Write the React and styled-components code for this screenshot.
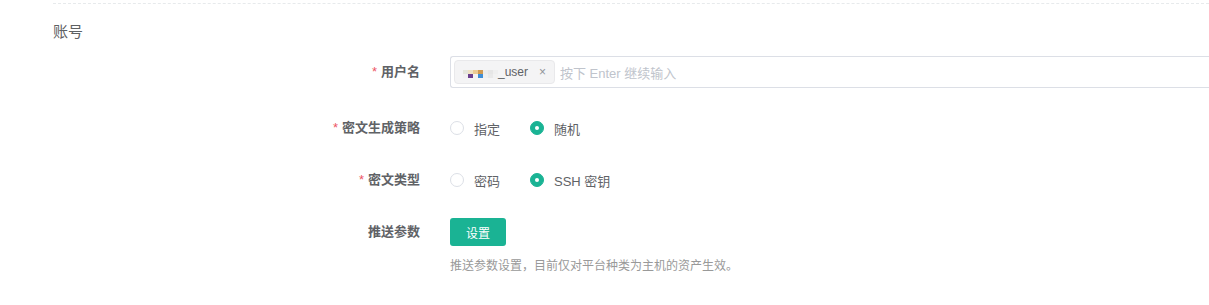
import React, { useState } from 'react'
import styled, { createGlobalStyle } from 'styled-components'

const GlobalStyle = createGlobalStyle`
  html, body {
    margin: 0;
    padding: 0;
    background: #fff;
    overflow: hidden;
  }
  body {
    font-family: "Liberation Sans", "Noto Sans CJK SC", sans-serif;
    color: #606266;
  }
`

const Section = styled.div`
  padding: 3px 0 0 53px;
`

const Divider = styled.div`
  border-top: 1px dashed #e7eaec;
  height: 0;
`

const Heading = styled.h3`
  margin: 18px 0 0;
  font-size: 15px;
  line-height: 20px;
  font-weight: normal;
  color: #5e6163;
`

const Form = styled.div`
  margin-top: 14px;
  margin-left: -53px;
`

const Row = styled.div`
  display: flex;
  align-items: flex-start;
  margin-bottom: ${({ gap }) => gap}px;
`

const Label = styled.label`
  flex: 0 0 420px;
  text-align: right;
  font-size: 13px;
  font-weight: bold;
  line-height: 32px;
  color: #606266;
  padding-right: 30px;
  box-sizing: content-box;
`

const Star = styled.span`
  color: #ed5565;
  font-weight: normal;
  margin-right: 4px;
`

const Content = styled.div`
  flex: 1;
  min-width: 0;
  display: flex;
  flex-direction: column;
  align-items: flex-start;
`

const Line = styled.div`
  height: 32px;
  display: flex;
  align-items: center;
`

const TagInput = styled.div`
  align-self: stretch;
  height: 32px;
  box-sizing: border-box;
  border: 1px solid #dcdfe6;
  border-right: none;
  border-radius: 3px 0 0 3px;
  display: flex;
  align-items: center;
  padding-left: 3px;
`

const Tag = styled.span`
  display: inline-flex;
  align-items: center;
  height: 24px;
  width: 101px;
  box-sizing: border-box;
  padding: 0 8px 0 8px;
  background: #f4f4f5;
  border: 1px solid #e9e9eb;
  border-radius: 4px;
  font-size: 12px;
  color: #606266;
`

const Mosaic = styled.span`
  display: inline-grid;
  grid-template-columns: repeat(7, 5px);
  grid-auto-rows: 4px;
  margin-top: 3px;
`

const Cell = styled.span`
  background: ${({ c }) => c};
`

const Close = styled.span`
  margin-left: auto;
  font-size: 12px;
  color: #909399;
`

const Placeholder = styled.span`
  margin-left: 5px;
  font-size: 13px;
  color: #c0c4cc;
`

const RadioOption = styled.label`
  display: inline-flex;
  align-items: center;
  margin-right: 30px;
  cursor: pointer;
  font-size: 13px;
  color: #606266;
`

const RadioDot = styled.span`
  width: 14px;
  height: 14px;
  box-sizing: border-box;
  border-radius: 50%;
  border: 1px solid ${({ checked }) => (checked ? '#1ab394' : '#dcdfe6')};
  background: ${({ checked }) => (checked ? '#1ab394' : '#fff')};
  display: inline-flex;
  align-items: center;
  justify-content: center;
  margin-right: 10px;
  &::after {
    content: '';
    width: 4px;
    height: 4px;
    border-radius: 50%;
    background: #fff;
    display: ${({ checked }) => (checked ? 'block' : 'none')};
  }
`

const Button = styled.button`
  height: 28px;
  width: 56px;
  border: none;
  border-radius: 3px;
  background: #1ab394;
  color: #fff;
  font-family: inherit;
  font-size: 12px;
  cursor: pointer;
`

const Help = styled.div`
  margin-top: 9px;
  font-size: 12px;
  line-height: 18px;
  color: #999;
`

// blurred user name in the screenshot
const mosaic = [
  ['#e4e6dc', '#efe2c4', '#eccb94', '#cf9a52', '#ececec', '#e6e6e6', '#efefef'],
  ['#f1f1f1', '#6b3f8e', '#f3f3f3', '#3f8ed6', '#f0f0f0', '#e9e9e9', '#f2f2f2'],
]

const RadioGroup = ({ options, value, onChange }) => (
  <Line>
    {options.map(opt => (
      <RadioOption key={opt} onClick={() => onChange(opt)}>
        <RadioDot checked={value === opt} />
        {opt}
      </RadioOption>
    ))}
  </Line>
)

const App = () => {
  const [strategy, setStrategy] = useState('随机')
  const [secretType, setSecretType] = useState('SSH 密钥')

  return (
    <>
      <GlobalStyle />
      <Section>
        <Divider />
        <Heading>账号</Heading>
        <Form>
          <Row gap={24}>
            <Label>
              <Star>*</Star>用户名
            </Label>
            <Content>
              <TagInput>
                <Tag>
                  <Mosaic>
                    {mosaic.flat().map((c, i) => (
                      <Cell key={i} c={c} />
                    ))}
                  </Mosaic>
                  _user
                  <Close>×</Close>
                </Tag>
                <Placeholder>按下 Enter 继续输入</Placeholder>
              </TagInput>
            </Content>
          </Row>
          <Row gap={20}>
            <Label>
              <Star>*</Star>密文生成策略
            </Label>
            <Content>
              <RadioGroup
                options={['指定', '随机']}
                value={strategy}
                onChange={setStrategy}
              />
            </Content>
          </Row>
          <Row gap={20}>
            <Label>
              <Star>*</Star>密文类型
            </Label>
            <Content>
              <RadioGroup
                options={['密码', 'SSH 密钥']}
                value={secretType}
                onChange={setSecretType}
              />
            </Content>
          </Row>
          <Row gap={0}>
            <Label>推送参数</Label>
            <Content>
              <Line>
                <Button>设置</Button>
              </Line>
              <Help>推送参数设置，目前仅对平台种类为主机的资产生效。</Help>
            </Content>
          </Row>
        </Form>
      </Section>
    </>
  )
}

export default App
